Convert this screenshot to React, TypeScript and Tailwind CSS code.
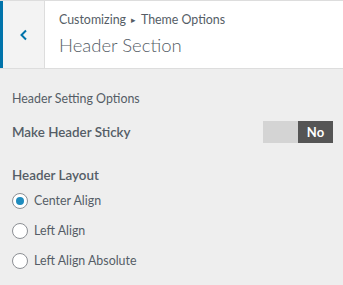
import React, { useState } from "react"

const options = ["Center Align", "Left Align", "Left Align Absolute"]

export default function App() {
    const [layout, setLayout] = useState("Center Align")
    const [sticky, setSticky] = useState(false)

    return (
        <div className="w-[343px] h-[285px] bg-[#eeeeee] text-[#555d66] overflow-hidden"
            style={{ fontFamily: 'Lato, "Noto Sans", sans-serif' }}>
            <div className="flex h-[69px] border-t border-b border-[#dddddd] bg-white">
                <button className="w-[45px] flex items-center justify-center bg-[#f3f3f3] border-l-[3px] border-l-[#0073aa] border-r border-r-[#dddddd] text-[#0073aa]">
                    <svg width="12" height="12" viewBox="0 0 12 12" fill="none">
                        <path d="M8 1.5 3.5 6 8 10.5" stroke="currentColor" strokeWidth="2" />
                    </svg>
                </button>
                <div className="flex flex-col justify-center pl-[14px]">
                    <div className="text-[12.4px] leading-[18px]">
                        Customizing <span className="text-[9px] mx-[2px] relative -top-px">▸</span> Theme Options
                    </div>
                    <div className="text-[18.5px] leading-[28px] font-light mt-[1px]">Header Section</div>
                </div>
            </div>

            <div className="pl-3 pr-[10px] pt-[21px]">
                <div className="text-[12.4px] leading-[18px]">Header Setting Options</div>

                <div className="flex items-center justify-between mt-[13px]">
                    <span className="text-[13.4px] font-semibold">Make Header Sticky</span>
                    <button onClick={() => setSticky(!sticky)} className="flex w-[70px] h-[22px]">
                        <span className="w-1/2 bg-[#d4d4d4]" />
                        <span className="w-1/2 bg-[#555555] text-white text-[13px] font-bold leading-[22px]">No</span>
                    </button>
                </div>

                <div className="text-[13.4px] font-semibold mt-[22px] leading-[20px]">Header Layout</div>
                <div className="flex flex-col mt-[6px] gap-[10px]">
                    {options.map((o) => (
                        <label key={o} className="flex items-center gap-[6px] h-[20px] text-[12.4px] cursor-pointer"
                            onClick={() => setLayout(o)}>
                            <span className="w-4 h-4 rounded-full border border-[#8c8f94] bg-white flex items-center justify-center">
                                {layout === o && <span className="w-2 h-2 rounded-full bg-[#1e8cbe]" />}
                            </span>
                            {o}
                        </label>
                    ))}
                </div>
            </div>
        </div>
    )
}
